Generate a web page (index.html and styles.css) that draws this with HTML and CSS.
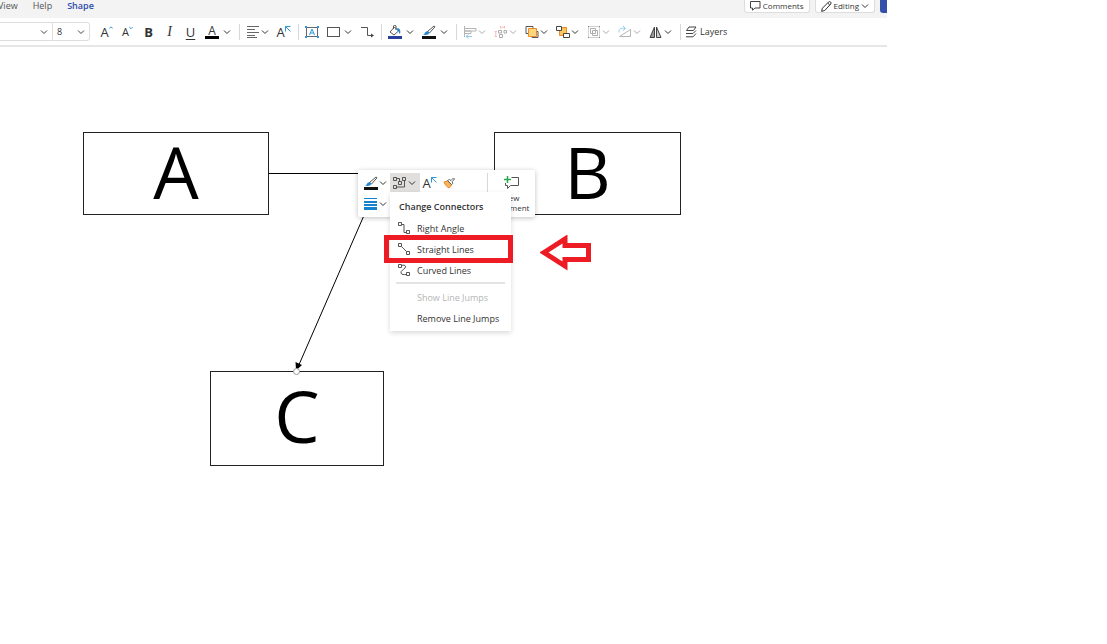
FILE: index.html
```html
<!DOCTYPE html>
<html lang="en">
<head>
    <meta charset="UTF-8">
    <meta name="viewport" content="width=device-width, initial-scale=1.0">
    <title>Change Connectors</title>
    <link rel="stylesheet" href="styles.css">
</head>
<body>

    <svg class="symbols" aria-hidden="true">
        <symbol id="chevron" viewBox="0 0 8 8"><path d="M1 2.500l3 3 3-3" fill="none" stroke="currentColor"/></symbol>
        <symbol id="pen" viewBox="0 0 14 14">
            <path d="M0 11h14v3H0z" fill="#111"/>
            <path d="M5.500 6.500L12 1l1 .8-5.500 6.200z" fill="#fff" stroke="#444" stroke-width=".9"/>
            <path d="M1 9.500c2 0 2-3.500 4.500-3.200 1.500.3 2 1.700 1 2.700C5.500 10 3 10.200 1 9.500z" fill="#1f87cf"/>
        </symbol>
        <symbol id="corner-arrow" viewBox="0 0 6 14">
            <path d="M5.500 1.500h-5v5M.500 1.500L5.500 6.500" fill="none" stroke="#2f96d8"/>
        </symbol>
    </svg>

    <div class="app">
        <header class="topbar">
            <nav class="tabs">
                <a href="#">View</a>
                <a href="#">Help</a>
                <a href="#" class="active">Shape</a>
            </nav>
            <div class="actions">
                <button class="action">
                    <svg width="11" height="10" viewBox="0 0 11 10"><path d="M.5.500h9.500v6.500H5L2.500 9.200V7h-2z" fill="none" stroke="#444"/></svg>
                    Comments
                </button>
                <button class="action">
                    <svg width="11" height="11" viewBox="0 0 11 11"><path d="M.6 10.400l.8-3.200L7.700.900c1.200-1.100 3.200.8 2.100 2.100L3.700 9.500zM6.700 2l2.200 2.200" fill="none" stroke="#333"/></svg>
                    Editing
                    <svg class="chev"><use href="#chevron"/></svg>
                </button>
                <button class="share" aria-label="Share"></button>
            </div>
        </header>

        <div class="toolbar">
            <select class="combo font-name" aria-label="Font"><option></option></select>
            <select class="combo font-size" aria-label="Font size"><option>8</option></select>

            <button class="tool" aria-label="Grow font"><span>A</span><svg width="4" height="12" viewBox="0 0 4 12"><path d="M.3 2.500L2 .8l1.700 1.700" fill="none" stroke="#2f96d8"/></svg></button>
            <button class="tool" aria-label="Shrink font"><span class="shrink">A</span><svg width="4" height="12" viewBox="0 0 4 12"><path d="M.3 1L2 2.700 3.700 1" fill="none" stroke="#2f96d8"/></svg></button>
            <button class="tool bold">B</button>
            <button class="tool italic">I</button>
            <button class="tool underline">U</button>
            <button class="split wide" aria-label="Font color"><span class="font-color">A</span><svg class="chev"><use href="#chevron"/></svg></button>
            <span class="divider"></span>

            <button class="split" aria-label="Align text">
                <svg width="14" height="14" viewBox="0 0 14 14"><path d="M1 1.500h12M1 4.500h8M1 7.500h12M1 10.500h8M1 12.500h10" stroke="#555" stroke-width=".9"/></svg>
                <svg class="chev"><use href="#chevron"/></svg>
            </button>
            <button class="tool" aria-label="Text style"><span>A</span><svg width="6" height="14"><use href="#corner-arrow"/></svg></button>
            <span class="divider"></span>

            <button class="tool" aria-label="Text box">
                <svg width="14" height="12" viewBox="0 0 14 12">
                    <rect x="1.500" y="1.500" width="11" height="9" fill="none" stroke="#666"/>
                    <path d="M4.500 9L7 3l2.500 6M5.300 7h3.400" fill="none" stroke="#2f96d8"/>
                    <path d="M0 0h2v2H0zM12 0h2v2h-2zM0 10h2v2H0zM12 10h2v2h-2z" fill="#2f96d8"/>
                </svg>
            </button>
            <button class="split wide" aria-label="Shapes">
                <svg width="14" height="14" viewBox="0 0 14 14"><rect x="1.500" y="2.500" width="12" height="9" fill="none" stroke="#555"/></svg>
                <svg class="chev"><use href="#chevron"/></svg>
            </button>
            <button class="tool" aria-label="Connector">
                <svg width="14" height="14" viewBox="0 0 14 14"><path d="M1 2.500h6.500v8H12" fill="none" stroke="#555"/><path d="M11 8.500l3 2-3 2z" fill="#444"/></svg>
            </button>
            <span class="divider"></span>

            <button class="split wide" aria-label="Fill">
                <svg width="14" height="14" viewBox="0 0 14 14">
                    <path d="M0 11h14v3H0z" fill="#27419b"/>
                    <path d="M2 7l4.500-5L10.500 6 6 10zM5.500 4V1c0-1 2.500-1 2.500 0v4" fill="#fff" stroke="#555"/>
                    <path d="M9.500 3c2.500.5 3.500 3 2.500 6-1.500-1-1-3.500-3-4z" fill="#1f87cf"/>
                </svg>
                <svg class="chev"><use href="#chevron"/></svg>
            </button>
            <button class="split wide" aria-label="Line">
                <svg width="14" height="14"><use href="#pen"/></svg>
                <svg class="chev"><use href="#chevron"/></svg>
            </button>
            <span class="divider"></span>

            <button class="split" disabled aria-label="Align">
                <svg width="14" height="14" viewBox="0 0 14 14">
                    <path d="M1.500 1v11M2 3.500h11v2.500H2M2 6h6v2.500H2" fill="none" stroke="#b5b5b5"/>
                    <path d="M9 11.500H3M5.500 9.500l-2.500 2 2.500 2" fill="none" stroke="#92cbee"/>
                </svg>
                <svg class="chev"><use href="#chevron"/></svg>
            </button>
            <button class="split" disabled aria-label="Position">
                <svg width="14" height="14" viewBox="0 0 14 14">
                    <path d="M4.500 5.500h3v2.500h-3zM10 5.500h2.500v2.500H10zM5.500 9.500h3v3h-3z" fill="none" stroke="#aaa"/>
                    <path d="M6.500 3.500V1M10.500 3.500V1M6.500 2.200h4M3 6.500H.5M3 11.500H.5M1.800 6.500v5" fill="none" stroke="#f7bbb8"/>
                </svg>
                <svg class="chev"><use href="#chevron"/></svg>
            </button>
            <button class="split" aria-label="Bring to front">
                <svg width="14" height="14" viewBox="0 0 14 14">
                    <path d="M1 1.500h7v7H1zM7 6.500h6v6H7z" fill="#fff" stroke="#555"/>
                    <path d="M3.500 3.500h8v8h-8z" fill="#ffd67e" stroke="#ed8b2b"/>
                </svg>
                <svg class="chev"><use href="#chevron"/></svg>
            </button>
            <button class="split" aria-label="Send to back">
                <svg width="14" height="14" viewBox="0 0 14 14">
                    <path d="M3.500 2.500h7v8h-7z" fill="#ffc75b" stroke="#ed8b2b"/>
                    <path d="M.5 1.500h5v4h-5zM7.500 8.500h6v4h-6z" fill="#fff" stroke="#444"/>
                </svg>
                <svg class="chev"><use href="#chevron"/></svg>
            </button>
            <button class="split" disabled aria-label="Group">
                <svg width="14" height="14" viewBox="0 0 14 14">
                    <path d="M3.500 3.500h5v5h-5zM5.500 5.500h5v5h-5z" fill="none" stroke="#b0b0b0"/>
                    <rect x="1.500" y="1.500" width="11" height="11" fill="none" stroke="#d0d0d0"/>
                    <path d="M1 1h1v1H1zM12 1h1v1h-1zM1 12h1v1H1zM12 12h1v1h-1z" fill="#888"/>
                </svg>
                <svg class="chev"><use href="#chevron"/></svg>
            </button>
            <button class="split" disabled aria-label="Rotate">
                <svg width="14" height="14" viewBox="0 0 14 14">
                    <path d="M1.500 11.500h11v-7z" fill="none" stroke="#b5b5b5"/>
                    <path d="M1 7.500C.5 4 3 2.500 7 3.500M5 1l2.500 2.500L5 5.500" fill="none" stroke="#92cbee"/>
                </svg>
                <svg class="chev"><use href="#chevron"/></svg>
            </button>
            <button class="split" aria-label="Flip">
                <svg width="14" height="14" viewBox="0 0 14 14">
                    <path d="M5.500 2v10.500H1z" fill="#999" stroke="#444"/>
                    <path d="M7.500 2v10.500H12z" fill="#ccc" stroke="#444"/>
                </svg>
                <svg class="chev"><use href="#chevron"/></svg>
            </button>
            <span class="divider"></span>

            <button class="layers">
                <svg width="12" height="12" viewBox="0 0 12 12"><path d="M4 1h7L8.500 4.500h-7zM1 7.500h7L11 4.500M1 10.800h7L11 7.500" fill="none" stroke="#444"/></svg>
                Layers
            </button>
        </div>

        <main class="canvas">
            <svg class="lines">
                <path d="M268 126.500h226M382 127L298 320" fill="none" stroke="#000"/>
                <path d="M296 323.500l-.5-8.500 6.500 3z" fill="#000"/>
            </svg>
            <div class="node node-a">A</div>
            <div class="node node-b">B</div>
            <div class="node node-c">C<span class="glue"></span></div>

            <div class="mini-toolbar">
                <div class="mini-tools">
                    <div class="mini-row">
                        <button class="split" aria-label="Line color">
                            <svg width="14" height="14"><use href="#pen"/></svg>
                            <svg class="chev"><use href="#chevron"/></svg>
                        </button>
                        <button class="split pressed" aria-label="Change connectors">
                            <svg width="14" height="14" viewBox="0 0 14 14">
                                <path d="M.5 1.500h3v3h-3zM9.500 1.500h3v3h-3zM.5 9.500h3v3h-3zM5.500 5.500h3v3h-3zM3.500 2.500h3v3M11.500 4.500v6.500h-8" fill="none" stroke="#444" stroke-width=".9"/>
                            </svg>
                            <svg class="chev"><use href="#chevron"/></svg>
                        </button>
                        <button class="tool" aria-label="Text style"><span>A</span><svg width="6" height="14"><use href="#corner-arrow"/></svg></button>
                        <button class="tool" aria-label="Format painter">
                            <svg width="12" height="12" viewBox="0 0 12 12">
                                <path d="M1 5l3.500-1 4 4L6 11C4 9.800 2 8 1 5z" fill="#f9b45c" stroke="#e88723"/>
                                <path d="M4.500 3.500l2-1 1.500 1 2.500-2.500 1 1L9.200 4.700l.6 1.800-1.300 1z" fill="#fff" stroke="#555" stroke-width=".9"/>
                            </svg>
                        </button>
                    </div>
                    <div class="mini-row">
                        <button class="split" aria-label="Line weight">
                            <svg width="14" height="14" viewBox="0 0 14 14"><path d="M0 1h13v1H0zM0 4h13v2H0zM0 7h13v2H0zM0 10h13v3H0z" fill="#1583cc"/></svg>
                            <svg class="chev"><use href="#chevron"/></svg>
                        </button>
                    </div>
                </div>
                <button class="new-comment">
                    <svg width="17" height="15" viewBox="0 0 17 15">
                        <path d="M8.500 2.500h7v8h-8l-3 3v-3h-2V8" fill="none" stroke="#555"/>
                        <path d="M4.500 1v7M1 4.500h7" stroke="#2aa84c" stroke-width="1.500"/>
                    </svg>
                    <span>New<br>Comment</span>
                </button>

                <div class="menu">
                    <h2>Change Connectors</h2>
                    <button class="item">
                        <svg width="13" height="13" viewBox="0 0 13 13"><path d="M.5.500h3v3h-3zM8.500 8.500h3v3h-3zM3.500 2.500h2.500v8h2.500" fill="none" stroke="#555"/></svg>
                        Right Angle
                    </button>
                    <button class="item">
                        <svg width="13" height="13" viewBox="0 0 13 13"><path d="M.5.500h3v3h-3zM8.500 8.500h3v3h-3zM3.500 3.500l5 5" fill="none" stroke="#555"/></svg>
                        Straight Lines
                    </button>
                    <button class="item">
                        <svg width="13" height="13" viewBox="0 0 13 13"><path d="M.5.500h3v3h-3zM8.500 8.500h3v3h-3zM3.500 1.500C7 .5 8.500 2 7 4 5.500 6 2.500 6.500 3 9c.5 2 3 1.500 5.500 1.500" fill="none" stroke="#555"/></svg>
                        Curved Lines
                    </button>
                    <hr>
                    <button class="item plain" disabled>Show Line Jumps</button>
                    <button class="item plain">Remove Line Jumps</button>
                </div>
            </div>

            <div class="highlight"></div>
            <svg class="arrow" width="52" height="36" viewBox="0 0 52 36">
                <path d="M4 17.500L25 4v6.500h23.500v14H25V31z" fill="#fff" stroke="#ed1c24" stroke-width="5"/>
            </svg>
        </main>
    </div>

</body>
</html>
```
FILE: styles.css
```css
body {
    margin: 0;
    background: #fff;
    font-family: "Open Sans", "Noto Sans", sans-serif;
    font-size: 9px;
    color: #333;
}

button {
    margin: 0;
    padding: 0;
    border: none;
    background: none;
    font: inherit;
    color: inherit;
    cursor: pointer;
}

svg {
    display: block;
    flex: none;
}

.symbols {
    position: absolute;
    width: 0;
    height: 0;
}

.app {
    display: flex;
    flex-direction: column;
    min-height: 100vh;
    margin-right: 220px;
}

.chev {
    width: 8px;
    height: 8px;
}

/* top bar */
.topbar {
    display: flex;
    justify-content: space-between;
    align-items: flex-start;
    height: 18px;
    background: #f3f3f3;
    overflow: hidden;
}

.tabs {
    display: flex;
    gap: 15px;
    margin-left: -2px;
    line-height: 12px;
}

.tabs a {
    color: #555;
    text-decoration: none;
}

.tabs .active {
    color: #2f4ba8;
    font-weight: 600;
}

.actions {
    display: flex;
    gap: 5px;
}

.action {
    display: flex;
    align-items: center;
    gap: 2px;
    height: 13px;
    padding: 0 5px;
    border: 1px solid #ddd;
    border-top: none;
    border-radius: 0 0 3px 3px;
    background: #fff;
    font-size: 8px;
    line-height: 10px;
}

.share {
    width: 7px;
    height: 13px;
    border-radius: 0 0 0 3px;
    background: #3450a8;
}

/* toolbar */
.toolbar {
    display: flex;
    align-items: center;
    height: 27px;
    border-bottom: 2px solid #e6e6e6;
}

.combo {
    height: 19px;
    margin: 0;
    padding: 0 4px;
    border: 1px solid #ddd;
    appearance: none;
    background: #fff url("data:image/svg+xml,%3Csvg xmlns='http://www.w3.org/2000/svg' width='8' height='8'%3E%3Cpath d='M1 2.5l3 3 3-3' fill='none' stroke='%23444'/%3E%3C/svg%3E") no-repeat right 4px center;
    font: inherit;
    color: inherit;
}

.font-name {
    width: 52px;
    border-left: none;
    border-right: none;
}

.font-size {
    width: 38px;
    margin-right: 6px;
    border-radius: 0 3px 3px 0;
}

.tool {
    display: flex;
    align-items: center;
    justify-content: center;
    width: 21px;
    height: 19px;
    font-size: 13px;
    line-height: 14px;
}

.shrink {
    font-size: 11px;
}

.bold {
    font-weight: 700;
}

.italic {
    font-family: "Liberation Serif", serif;
    font-style: italic;
    font-size: 14px;
}

.underline {
    text-decoration: underline;
    text-underline-offset: 2px;
}

.split {
    display: flex;
    align-items: center;
    gap: 1px;
    width: 31px;
    height: 19px;
    padding: 0 4px;
}

.wide {
    gap: 4px;
    width: 34px;
}

.split:disabled {
    color: #aaa;
}

.font-color {
    width: 14px;
    border-bottom: 3px solid #000;
    font-size: 12px;
    line-height: 11px;
}

.divider {
    width: 1px;
    height: 16px;
    margin: 0 2px 0 4px;
    background: #d8d8d8;
}

.layers {
    display: flex;
    align-items: center;
    gap: 3px;
    padding: 0 2px;
}

/* drawing */
.canvas {
    position: relative;
    flex: 1;
}

.lines {
    position: absolute;
    top: 0;
    left: 0;
    width: 100%;
    height: 100%;
}

.node {
    position: absolute;
    box-sizing: border-box;
    border: 1px solid #222;
    font-size: 72px;
    font-weight: 500;
    line-height: 76px;
    text-align: center;
    color: #000;
}

.node-a {
    top: 85px;
    left: 83px;
    width: 186px;
    height: 83px;
}

.node-b {
    top: 85px;
    left: 494px;
    width: 187px;
    height: 83px;
}

.node-c {
    top: 324px;
    left: 210px;
    width: 174px;
    height: 95px;
    line-height: 86px;
}

.glue {
    position: absolute;
    top: -4px;
    left: 82px;
    width: 5px;
    height: 5px;
    border: 1px solid #999;
    border-radius: 50%;
    background: #fff;
}

/* floating toolbar */
.mini-toolbar {
    position: absolute;
    top: 123px;
    left: 358px;
    display: flex;
    padding: 3px 5px 2px 2px;
    border-radius: 2px;
    background: #fff;
    box-shadow: 0 1px 5px rgba(0, 0, 0, 0.25);
}

.mini-tools {
    width: 127px;
}

.mini-row {
    display: flex;
    height: 21px;
}

.mini-row .split {
    width: 30px;
}

.mini-row .tool {
    width: 19px;
}

.pressed {
    padding: 0 3px;
    background: #e1dfdd;
}

.new-comment {
    display: flex;
    flex-direction: column;
    align-items: center;
    gap: 3px;
    width: 43px;
    padding: 2px 0 0 4px;
    border-left: 1px solid #d8d8d8;
    font-size: 8px;
    line-height: 10px;
}

.menu {
    position: absolute;
    top: 22px;
    left: 32px;
    box-sizing: border-box;
    width: 121px;
    padding: 4px 6px 2px;
    background: #fff;
    box-shadow: 0 2px 5px rgba(0, 0, 0, 0.15);
}

.menu h2 {
    margin: 0 3px;
    font-size: 9px;
    font-weight: 600;
    line-height: 22px;
    white-space: nowrap;
}

.item {
    display: flex;
    align-items: center;
    gap: 6px;
    width: 100%;
    height: 21px;
    padding: 0 2px;
    white-space: nowrap;
}

.item:disabled {
    color: #b5b5b5;
}

.plain {
    padding-left: 21px;
}

.menu hr {
    height: 2px;
    margin: 1px 0 3px;
    border: none;
    background: #e3e3e3;
}

/* callout */
.highlight {
    position: absolute;
    top: 188px;
    left: 384px;
    box-sizing: border-box;
    width: 129px;
    height: 28px;
    border: 5px solid #ed1c24;
}

.arrow {
    position: absolute;
    top: 188px;
    left: 540px;
}
```
